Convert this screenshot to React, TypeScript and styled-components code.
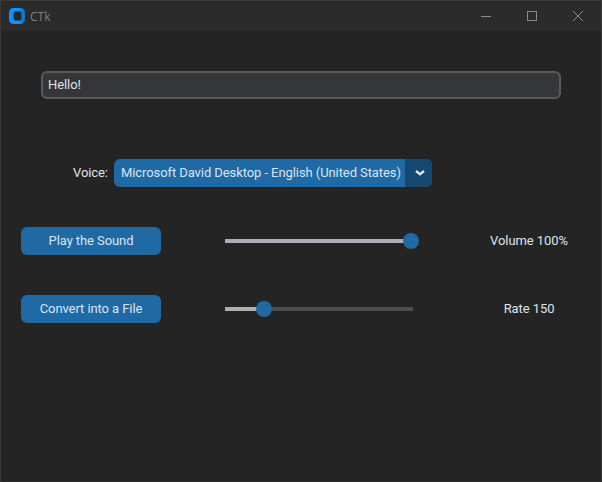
import React from "react"
import styled, { createGlobalStyle } from "styled-components"

const GlobalStyle = createGlobalStyle`
  html, body {
    margin: 0;
    padding: 0;
    background: #242424;
  }
`

const Window = styled.div`
  position: relative;
  box-sizing: border-box;
  width: 602px;
  height: 482px;
  overflow: hidden;
  border: 1px solid #3a3a3a;
  border-bottom-color: #2e2e2e;
  background: #242424;
  color: #dce4ee;
  font-family: Roboto, "Liberation Sans", sans-serif;
  font-size: 13px;
  letter-spacing: -0.08px;
`

const TitleBar = styled.header`
  display: flex;
  align-items: center;
  height: 30px;
  padding-left: 8px;
  background: #2b2b2b;
  letter-spacing: 0;
`

const AppIcon = styled.svg`
  width: 16px;
  height: 16px;
  margin-right: 5px;
`

const AppName = styled.span`
  flex: 1;
  color: #7f7f7f;
  font-family: "Open Sans", sans-serif;
  font-size: 12px;
`

const WindowButton = styled.div`
  display: flex;
  align-items: center;
  justify-content: center;
  width: 46px;
  height: 30px;
  color: #8c8c8c;

  & > svg {
    width: 10px;
    height: 10px;
  }
`

const Main = styled.main`
  display: flex;
  flex-direction: column;
  padding-top: 40px;
`

const TextEntry = styled.input`
  box-sizing: border-box;
  width: 520px;
  height: 28px;
  margin-left: 40px;
  padding: 0 5px 2px;
  border: 2px solid #565b5e;
  border-radius: 6px;
  outline: none;
  background: #343638;
  color: #dce4ee;
  font: inherit;
  letter-spacing: inherit;
`

const VoiceRow = styled.div`
  display: flex;
  align-items: center;
  gap: 6px;
  height: 28px;
  margin-top: 60px;
  margin-left: 72px;
`

const Label = styled.span`
  line-height: 28px;
`

const Dropdown = styled.div`
  display: flex;
  width: 318px;
  height: 28px;
  border-radius: 6px;
  overflow: hidden;
  background: #1f6aa5;
`

const DropdownText = styled.span`
  flex: 1;
  padding-left: 7px;
  line-height: 28px;
  white-space: nowrap;
`

const DropdownArrow = styled.span`
  display: flex;
  align-items: center;
  justify-content: center;
  box-sizing: border-box;
  width: 27px;
  padding-left: 3px;
  background: #144870;

  & > svg {
    width: 10px;
    height: 6px;
  }
`

const ControlRow = styled.div`
  display: grid;
  grid-template-columns: 140px 188px 1fr;
  column-gap: 64px;
  align-items: center;
  height: 28px;
  margin-top: 40px;
  margin-left: 20px;
`

const ActionButton = styled.button`
  height: 28px;
  padding: 0 0 2px;
  border: 0;
  border-radius: 6px;
  background: #1f6aa5;
  color: #dce4ee;
  font: inherit;
  letter-spacing: inherit;
`

const SliderTrack = styled.div`
  position: relative;
  height: 4px;
  background: #4a4d50;
`

const SliderFill = styled.div`
  height: 100%;
  background: #aab0b5;
`

const SliderKnob = styled.div`
  position: absolute;
  top: -6px;
  width: 16px;
  height: 16px;
  margin-left: -8px;
  border-radius: 50%;
  background: #1f6aa5;
`

const Readout = styled.span`
  width: 130px;
  margin-left: -13px;
  padding-bottom: 2px;
  text-align: center;
  white-space: nowrap;
`

const EdgeMark = styled.i`
  position: absolute;
  left: -1px;
  top: 286px;
  width: 1px;
  height: 6px;
  background: #8f7a22;
`

function Slider({ percent }: { percent: number }) {
  return (
    <SliderTrack>
      <SliderFill style={{ width: `${percent}%` }} />
      <SliderKnob style={{ left: `${percent}%` }} />
    </SliderTrack>
  )
}

export default function App() {
  return (
    <>
      <GlobalStyle />
      <Window>
        <TitleBar>
          <AppIcon viewBox="0 0 16 16">
            <defs>
              <linearGradient id="ctkBlue" x1="0" y1="0" x2="1" y2="0">
                <stop offset="0.6" stopColor="#0f93ff" />
                <stop offset="1" stopColor="#0a6fc4" />
              </linearGradient>
            </defs>
            <rect width="16" height="16" rx="4.5" fill="url(#ctkBlue)" />
            <rect x="4.5" y="3.5" width="8" height="9" rx="2" fill="#25282b" />
          </AppIcon>
          <AppName>CTk</AppName>
          <WindowButton>
            <svg viewBox="0 0 10 10">
              <path d="M0 5.5h10" stroke="currentColor" fill="none" />
            </svg>
          </WindowButton>
          <WindowButton>
            <svg viewBox="0 0 10 10">
              <rect x=".5" y=".5" width="9" height="9" stroke="currentColor" fill="none" />
            </svg>
          </WindowButton>
          <WindowButton>
            <svg viewBox="0 0 10 10">
              <path d="M0 0l10 10M10 0L0 10" stroke="currentColor" fill="none" />
            </svg>
          </WindowButton>
        </TitleBar>
        <Main>
          <TextEntry defaultValue="Hello!" />
          <VoiceRow>
            <Label>Voice:</Label>
            <Dropdown>
              <DropdownText>Microsoft David Desktop - English (United States)</DropdownText>
              <DropdownArrow>
                <svg viewBox="0 0 10 6">
                  <path d="M1 1l4 3.2L9 1" stroke="currentColor" strokeWidth="2.4" fill="none" />
                </svg>
              </DropdownArrow>
            </Dropdown>
          </VoiceRow>
          <ControlRow>
            <ActionButton>Play the Sound</ActionButton>
            <Slider percent={99} />
            <Readout>Volume 100%</Readout>
          </ControlRow>
          <ControlRow>
            <ActionButton>Convert into a File</ActionButton>
            <Slider percent={21} />
            <Readout>Rate 150</Readout>
          </ControlRow>
        </Main>
        <EdgeMark />
      </Window>
    </>
  )
}
